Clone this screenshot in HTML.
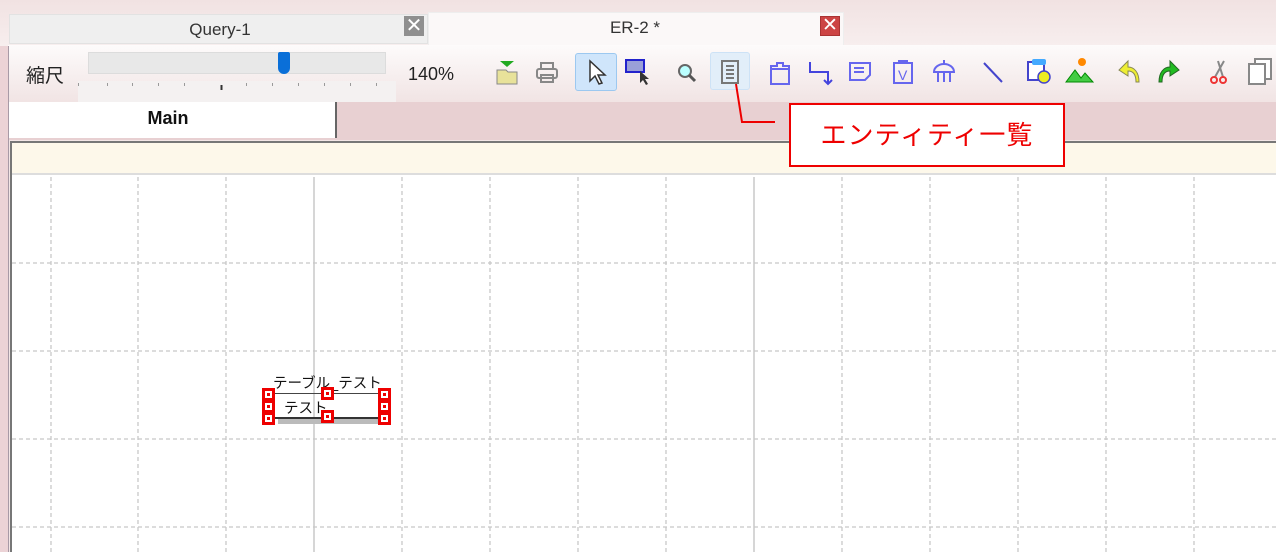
<!DOCTYPE html>
<html><head><meta charset="utf-8"><style>
*{margin:0;padding:0;box-sizing:border-box}
body{width:1276px;height:552px;overflow:hidden;position:relative;background:#f3e6e6;font-family:"Liberation Sans","Noto Sans CJK JP",sans-serif}
.abs{position:absolute}
</style></head><body>
<div class="abs" style="left:0;top:0;width:1276px;height:46px;background:linear-gradient(#f1e2e2,#f7eeee)"></div>
<div class="abs" style="left:9px;top:14px;width:419px;height:30px;background:#efefef;border:1px solid #e2e2e2"></div>
<div class="abs" style="left:150px;top:20px;width:140px;text-align:center;font-size:17px;color:#333">Query-1</div>
<div class="abs" style="left:404px;top:16px;width:20px;height:20px;background:#8f8f8f;color:#fff;font-size:20px;line-height:20px;text-align:center">✕</div>
<div class="abs" style="left:428px;top:12px;width:416px;height:34px;background:#fbf8f8;border:1px solid #eee;border-bottom:none"></div>
<div class="abs" style="left:560px;top:18px;width:150px;text-align:center;font-size:17px;color:#333">ER-2 *</div>
<div class="abs" style="left:820px;top:16px;width:20px;height:20px;background:#c44;border:1px solid #a33;color:#fff;font-size:19px;line-height:18px;text-align:center">✕</div>
<!-- toolbar -->
<div class="abs" style="left:8px;top:45px;width:1268px;height:57px;background:linear-gradient(#fdfbfb,#f1e4e4)"></div>
<div class="abs" style="left:26px;top:61px;font-size:19px;color:#222">縮尺</div>
<div class="abs" style="left:88px;top:52px;width:298px;height:22px;background:#e8e8e8;border:1px solid #dcdcdc"></div>
<div class="abs" style="left:78px;top:81px;width:318px;height:21px;background:#f4f1f1"></div>
<div class="abs" style="left:278px;top:52px;width:12px;height:22px;background:#0a6fd8;border-radius:2px 2px 6px 6px"></div>
<svg class="abs" style="left:78px;top:80px" width="318" height="14"><g stroke="#888" stroke-width="1">
<line x1="0" y1="3" x2="0" y2="5"/><line x1="0" y1="3" x2="0" y2="6"/></g>
<g stroke="#999"><line x1="0" y1="3" x2="0" y2="6"/>
<line x1="0" y1="3" x2="0" y2="6" transform="translate(0 0)"/></g>
<g stroke="#999">
<line x1="0" y1="3" x2="0" y2="6" transform="translate(0 0)"/></g>
</svg>
<svg class="abs" style="left:78px;top:80px" width="318" height="14" stroke="#9a9a9a">
<line x1="0.5" x2="0.5" y1="3" y2="6" transform="translate(0)"/>
<line x1="29.5" x2="29.5" y1="3" y2="6"/><line x1="54.5" x2="54.5" y1="3" y2="6"/><line x1="80.5" x2="80.5" y1="3" y2="6"/><line x1="106.5" x2="106.5" y1="3" y2="6"/><line x1="143.5" x2="143.5" y1="5" y2="10" stroke="#333" stroke-width="2"/><line x1="168.5" x2="168.5" y1="3" y2="6"/><line x1="194.5" x2="194.5" y1="3" y2="6"/><line x1="220.5" x2="220.5" y1="3" y2="6"/><line x1="246.5" x2="246.5" y1="3" y2="6"/><line x1="272.5" x2="272.5" y1="3" y2="6"/><line x1="298.5" x2="298.5" y1="3" y2="6"/></svg>
<div class="abs" style="left:408px;top:64px;font-size:18px;color:#222">140%</div>
<!-- icons -->
<svg class="abs" style="left:494px;top:58px" width="28" height="28"><path d="M6 3h14l-7 6z" fill="#2a2" /><path d="M3 12h9l2 2h9v12H3z" fill="#e8e29a" stroke="#888"/></svg>
<svg class="abs" style="left:535px;top:61px" width="24" height="24" fill="none" stroke="#888" stroke-width="2"><rect x="6" y="2" width="12" height="6"/><rect x="2" y="8" width="20" height="9" rx="2"/><rect x="6" y="14" width="12" height="7"/></svg>
<div class="abs" style="left:575px;top:53px;width:42px;height:38px;background:#cfe5fb;border:1px solid #9cc8f0;border-radius:3px"></div>
<svg class="abs" style="left:587px;top:59px" width="20" height="28"><path d="M3 2v20l5-5 4 8 3-1-4-8h7z" fill="#fff" stroke="#333" stroke-width="1.5"/></svg>
<svg class="abs" style="left:624px;top:57px" width="30" height="30"><rect x="2" y="3" width="18" height="12" fill="#9aa0d8" stroke="#22c" stroke-width="2"/><path d="M16 14v12l3-3 3 5 2-1-3-5h4z" fill="#333"/></svg>
<svg class="abs" style="left:676px;top:62px" width="22" height="22"><circle cx="9" cy="9" r="6" fill="#bff" stroke="#666" stroke-width="2"/><line x1="13" y1="13" x2="19" y2="19" stroke="#555" stroke-width="3"/></svg>
<div class="abs" style="left:710px;top:52px;width:40px;height:38px;background:#e2eef9;border:1px solid #cde2f6;border-radius:3px"></div>
<svg class="abs" style="left:718px;top:58px" width="26" height="28" fill="none" stroke="#777" stroke-width="2"><rect x="4" y="3" width="16" height="22"/><path d="M8 8h8M8 12h8M8 16h8M8 20h8"/></svg>
<svg class="abs" style="left:768px;top:60px" width="24" height="26" fill="none" stroke="#66e" stroke-width="2"><path d="M3 6h6v-3h6v3h6v18H3zM3 9h18"/></svg>
<svg class="abs" style="left:806px;top:60px" width="28" height="26" fill="none" stroke="#44d" stroke-width="2"><path d="M4 2v10h18v10M18 20l4 4 4-4M22 22v2"/></svg>
<svg class="abs" style="left:848px;top:60px" width="26" height="24" fill="none" stroke="#66e" stroke-width="2"><path d="M2 3h20v12l-5 5H2z M6 8h10M6 12h10"/></svg>
<svg class="abs" style="left:891px;top:58px" width="24" height="28" fill="none" stroke="#66e" stroke-width="2"><path d="M3 5h18v20H3z M7 3h10"/><text x="7" y="22" font-size="14" fill="#66e" stroke="none" font-family="Liberation Sans">V</text></svg>
<svg class="abs" style="left:930px;top:58px" width="28" height="28" fill="none" stroke="#66e" stroke-width="2"><path d="M14 2v4M4 14a10 8 0 0 1 20 0zM4 14h20M8 14v10M14 14v10M20 14v10"/></svg>
<svg class="abs" style="left:980px;top:60px" width="26" height="26"><line x1="4" y1="3" x2="22" y2="22" stroke="#44c" stroke-width="2"/></svg>
<svg class="abs" style="left:1024px;top:56px" width="28" height="30"><rect x="4" y="6" width="16" height="18" fill="#fff" stroke="#44c" stroke-width="2"/><rect x="8" y="3" width="14" height="6" rx="2" fill="#4af"/><circle cx="20" cy="21" r="6" fill="#ee2" stroke="#44c" stroke-width="1.5"/></svg>
<svg class="abs" style="left:1064px;top:56px" width="30" height="28"><circle cx="18" cy="6" r="4" fill="#f80"/><path d="M2 26l9-12 6 8 4-5 8 9z" fill="#4c4" stroke="#080"/></svg>
<svg class="abs" style="left:1116px;top:58px" width="26" height="28"><path d="M12 3L3 12l9 6v-5c5 0 8 3 8 11h3c0-10-5-15-11-15z" fill="#ee3" stroke="#885" stroke-width="1"/></svg>
<svg class="abs" style="left:1156px;top:58px" width="26" height="28"><path d="M14 3l9 9-9 6v-5c-5 0-8 3-8 11H3c0-10 5-15 11-15z" fill="#2b2" stroke="#262" stroke-width="1"/></svg>
<svg class="abs" style="left:1206px;top:58px" width="24" height="28" fill="none" stroke-width="2"><path d="M18 3l-9 16M12 3l5 16" stroke="#888"/><circle cx="8" cy="22" r="3" stroke="#e33"/><circle cx="17" cy="22" r="3" stroke="#e33"/></svg>
<svg class="abs" style="left:1246px;top:56px" width="30" height="30" fill="#fff" stroke="#888" stroke-width="2"><rect x="9" y="3" width="16" height="20"/><rect x="3" y="8" width="16" height="20"/></svg>
<!-- sheet tabs row -->
<div class="abs" style="left:8px;top:102px;width:1268px;height:38px;background:#e8d0d2"></div>
<div class="abs" style="left:0;top:46px;width:9px;height:506px;background:#ecd3d6;border-right:1px solid #a89aa6"></div>
<div class="abs" style="left:9px;top:102px;width:328px;height:36px;background:#fff;border-right:2px solid #666"></div>
<div class="abs" style="left:9px;top:108px;width:318px;text-align:center;font-size:18px;font-weight:bold;color:#111">Main</div>
<!-- canvas -->
<div class="abs" style="left:10px;top:141px;width:1266px;height:411px;background:#fff;border-top:2px solid #777;border-left:2px solid #777"></div>
<div class="abs" style="left:12px;top:143px;width:1264px;height:32px;background:#fdf8ea;border-bottom:2px solid #ddd"></div>
<svg class="abs" style="left:12px;top:177px" width="1264" height="375">
<g stroke="#c8c8c8" stroke-width="1.3" stroke-dasharray="4 3">
<line x1="39" y1="0" x2="39" y2="375"/><line x1="126" y1="0" x2="126" y2="375"/><line x1="214" y1="0" x2="214" y2="375"/>
<line x1="390" y1="0" x2="390" y2="375"/><line x1="478" y1="0" x2="478" y2="375"/><line x1="566" y1="0" x2="566" y2="375"/><line x1="654" y1="0" x2="654" y2="375"/>
<line x1="830" y1="0" x2="830" y2="375"/><line x1="918" y1="0" x2="918" y2="375"/><line x1="1006" y1="0" x2="1006" y2="375"/><line x1="1094" y1="0" x2="1094" y2="375"/><line x1="1182" y1="0" x2="1182" y2="375"/>
<line x1="0" y1="86" x2="1264" y2="86"/><line x1="0" y1="174" x2="1264" y2="174"/><line x1="0" y1="262" x2="1264" y2="262"/><line x1="0" y1="350" x2="1264" y2="350"/>
</g>
<g stroke="#c8c8c8" stroke-width="1.5"><line x1="302" y1="0" x2="302" y2="375"/><line x1="742" y1="0" x2="742" y2="375"/></g>
</svg>
<!-- entity -->
<div class="abs" style="left:273px;top:372px;font-size:14.5px;color:#111;white-space:nowrap">テーブル_テスト</div>
<div class="abs" style="left:278px;top:418px;width:102px;height:6px;background:#bbb"></div>
<div class="abs" style="left:270px;top:393px;width:116px;height:1px;background:#444"></div>
<div class="abs" style="left:270px;top:417px;width:116px;height:2px;background:#333"></div>
<div class="abs" style="left:284px;top:397px;font-size:14.5px;color:#111">テスト</div>
<svg class="abs" style="left:260px;top:385px" width="136" height="40">
<g fill="#fff" stroke="#e00" stroke-width="3">
<rect x="3.5" y="4.5" width="10" height="10"/><rect x="3.5" y="16.5" width="10" height="10"/><rect x="3.5" y="28.5" width="10" height="10"/>
<rect x="62.5" y="3.5" width="10" height="10"/><rect x="62.5" y="26.5" width="10" height="10"/>
<rect x="119.5" y="4.5" width="10" height="10"/><rect x="119.5" y="16.5" width="10" height="10"/><rect x="119.5" y="28.5" width="10" height="10"/>
</g>
<g fill="#e00"><rect x="7" y="8" width="3" height="3"/><rect x="7" y="20" width="3" height="3"/><rect x="7" y="32" width="3" height="3"/><rect x="66" y="7" width="3" height="3"/><rect x="66" y="30" width="3" height="3"/><rect x="123" y="8" width="3" height="3"/><rect x="123" y="20" width="3" height="3"/><rect x="123" y="32" width="3" height="3"/></g>
</svg>
<!-- callout -->
<svg class="abs" style="left:730px;top:80px" width="60" height="50"><path d="M6 4l6 38h33" fill="none" stroke="#e00" stroke-width="2"/></svg>
<div class="abs" style="left:789px;top:103px;width:276px;height:64px;background:#fff;border:2px solid #e00"></div>
<div class="abs" style="left:789px;top:115px;width:276px;text-align:center;font-size:26px;color:#e00;letter-spacing:1px">エンティティ一覧</div>
</body></html>
